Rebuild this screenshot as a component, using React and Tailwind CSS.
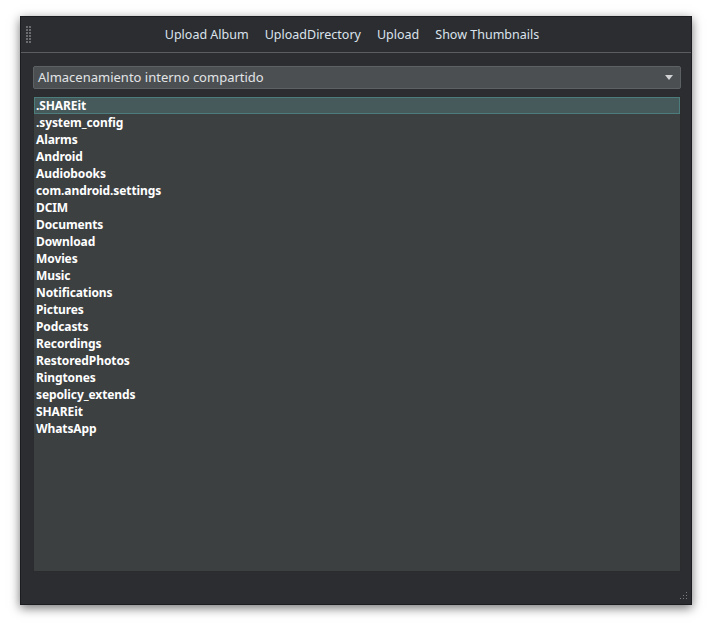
import React from 'react';

const folders = [
  '.SHAREit', '.system_config', 'Alarms', 'Android', 'Audiobooks', 'com.android.settings',
  'DCIM', 'Documents', 'Download', 'Movies', 'Music', 'Notifications', 'Pictures',
  'Podcasts', 'Recordings', 'RestoredPhotos', 'Ringtones', 'sepolicy_extends', 'SHAREit', 'WhatsApp',
];

const actions = ['Upload Album', 'UploadDirectory', 'Upload', 'Show Thumbnails'];

function Grip() {
  return (
    <div className="grid grid-cols-2 gap-x-[1px] gap-y-[1px]">
      {Array.from({ length: 12 }).map((_, i) => (
        <span key={i} className="block w-[2px] h-[2px] bg-[#6a6c70]" />
      ))}
    </div>
  );
}

export default function App() {
  return (
    <div className="w-[713px] h-[630px] bg-white pt-[16px] pl-[20px]" style={{ fontFamily: '"Noto Sans", "Open Sans", sans-serif' }}>
      <div className="w-[672px] h-[589px] bg-[#2b2d31] border border-[#1c1d20] shadow-[0_3px_10px_rgba(0,0,0,0.55)] flex flex-col">
        <div className="h-[36px] flex items-center border-b border-[#5b5d61] shrink-0">
          <div className="pl-[5px]"><Grip /></div>
          <div className="flex-1 flex justify-center gap-[16px] pr-[18px] pt-[2px] text-[12.5px] text-[#dbe3ec]">
            {actions.map(a => <span key={a}>{a}</span>)}
          </div>
        </div>
        <div className="flex-1 flex flex-col pl-[12px] pr-[10px] pt-[13px] pb-[32px]">
          <div className="h-[23px] rounded-[2px] border border-[#5d6164] bg-[#4b4f52] flex items-center justify-between pl-[4px] pr-[7px] text-[13px] text-[#e2e4e6]">
            <span>Almacenamiento interno compartido</span>
            <svg width="8" height="5" viewBox="0 0 8 5"><path d="M0 0h8L4 5z" fill="#d0d2d4" /></svg>
          </div>
          <div className="mt-[7px] flex-1 bg-[#3c4041] border border-[#2a2c2e] text-[12px] font-bold text-white leading-[17px] tracking-[-0.1px]">
            {folders.map((f, i) => (
              <div key={f} className={i === 0 ? 'h-[17px] pl-[1px] bg-[#465a5c] border border-[#4d7c7c] leading-[15px]' : 'h-[17px] pl-[2px]'}>
                {f}
              </div>
            ))}
          </div>
        </div>
        <div className="relative h-0">
          <div className="absolute right-[3px] bottom-[3px] w-[10px] h-[10px]">
            <span className="absolute right-[1px] bottom-[8px] w-[1px] h-[1px] bg-[#7a7c80]" />
            <span className="absolute right-[4px] bottom-[5px] w-[1px] h-[1px] bg-[#7a7c80]" />
            <span className="absolute right-[1px] bottom-[5px] w-[1px] h-[1px] bg-[#7a7c80]" />
            <span className="absolute right-[7px] bottom-[2px] w-[1px] h-[1px] bg-[#7a7c80]" />
            <span className="absolute right-[4px] bottom-[2px] w-[1px] h-[1px] bg-[#7a7c80]" />
            <span className="absolute right-[1px] bottom-[2px] w-[1px] h-[1px] bg-[#7a7c80]" />
          </div>
        </div>
      </div>
    </div>
  );
}
